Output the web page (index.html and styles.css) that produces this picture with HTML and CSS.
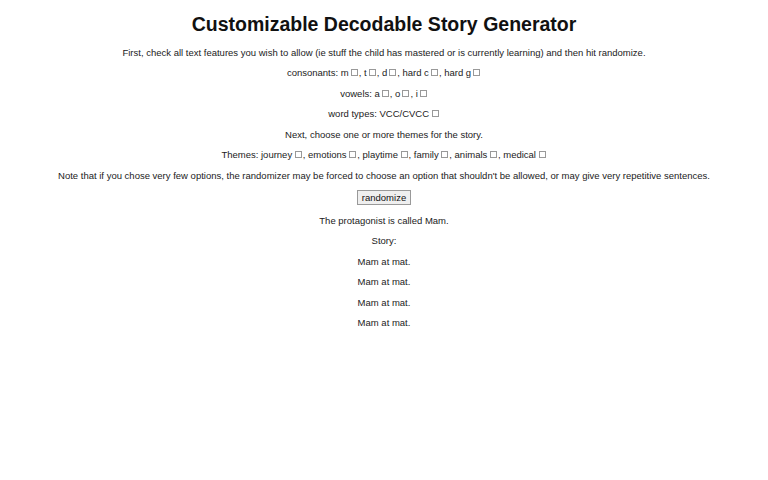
FILE: index.html
```html
<html>

<head>
  <meta charset="utf8">
  <title>Customizable Decodable Story Generator</title>
  <link rel="stylesheet" href="styles.css">
</head>

<body>
  <h1>Customizable Decodable Story Generator</h1>
  <p>First, check all text features you wish to allow (ie stuff the child has mastered or is currently learning) and then hit randomize.</p>
  <p class="letters">consonants: m<input type="checkbox">, t<input type="checkbox">, d<input type="checkbox">, hard c<input type="checkbox">, hard g<input type="checkbox"></p>
  <p class="letters">vowels: a<input type="checkbox">, o<input type="checkbox">, i<input type="checkbox"></p>
  <p>word types: VCC/CVCC <input type="checkbox"></p>
  <p>Next, choose one or more themes for the story.</p>
  <p>Themes: journey <input type="checkbox">, emotions <input type="checkbox">, playtime <input type="checkbox">, family <input type="checkbox">, animals <input type="checkbox">, medical <input type="checkbox"></p>
  <p>Note that if you chose very few options, the randomizer may be forced to choose an option that shouldn't be allowed, or may give very repetitive sentences.</p>
  <button>randomize</button>
  <p>The protagonist is called Mam.</p>
  <p>Story:</p>
  <p>Mam at mat.</p>
  <p>Mam at mat.</p>
  <p>Mam at mat.</p>
  <p>Mam at mat.</p>
</body>

</html>
```

FILE: styles.css
```css
body {
  font: 9.5px "Liberation Sans", Arial, sans-serif;
  text-align: center;
  color: #222;
  margin: 8px;
}

h1 {
  font-size: 19.5px;
  color: #111;
  margin: 5px 0 10.5px;
}

p {
  margin: 9.5px 0;
}

input[type="checkbox"] {
  appearance: none;
  box-sizing: border-box;
  width: 7px;
  height: 7px;
  margin: 0 1px 0 0;
  border: 1px solid #999;
  background: #fff;
  vertical-align: 0;
}

.letters input[type="checkbox"] {
  margin-left: 2px;
}

button {
  font: inherit;
  color: #111;
  background: #efefef;
  border: 1px solid #999;
  border-radius: 0;
  padding: 1px 4px;
}
```
